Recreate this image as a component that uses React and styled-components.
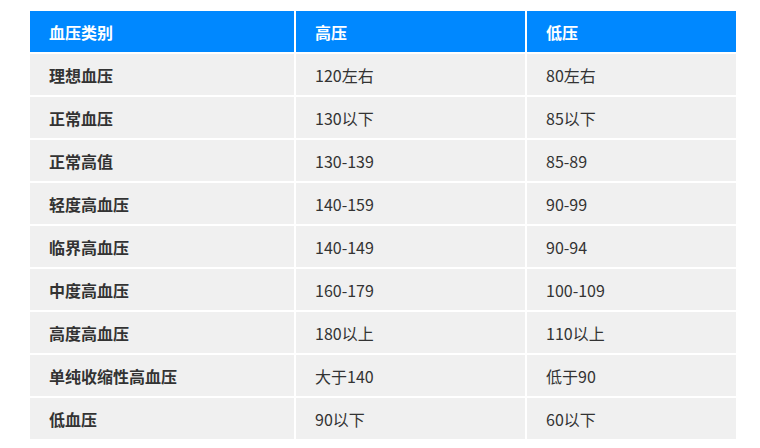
import React from "react";
import styled, { createGlobalStyle } from "styled-components";

const Global = createGlobalStyle`
  html, body { margin: 0; padding: 0; background: #ffffff; }
  body { font-family: "Noto Sans CJK SC", "Noto Sans", sans-serif; }
`;

const Page = styled.div`
  padding: 9px 0 0 28px;
`;

const Table = styled.table`
  border-collapse: separate;
  border-spacing: 2px;
  table-layout: fixed;
  width: 710px;
  font-size: 16px;
`;

const Col = styled.col`
  width: ${(p) => p.$w}px;
`;

const HeadCell = styled.th`
  height: 41px;
  padding: 0 0 0 19px;
  box-sizing: border-box;
  background: #0088ff;
  color: #ffffff;
  font-weight: 700;
  text-align: left;
  vertical-align: middle;
`;

const Cell = styled.td`
  height: 41px;
  padding: 0 0 0 19px;
  box-sizing: border-box;
  background: #f0f0f0;
  color: #333333;
  font-weight: ${(p) => (p.$strong ? 700 : 400)};
  text-align: left;
  vertical-align: middle;
  white-space: nowrap;
`;

const rows = [
  ["理想血压", "120左右", "80左右"],
  ["正常血压", "130以下", "85以下"],
  ["正常高值", "130-139", "85-89"],
  ["轻度高血压", "140-159", "90-99"],
  ["临界高血压", "140-149", "90-94"],
  ["中度高血压", "160-179", "100-109"],
  ["高度高血压", "180以上", "110以上"],
  ["单纯收缩性高血压", "大于140", "低于90"],
  ["低血压", "90以下", "60以下"],
];

export default function App() {
  return (
    <Page>
      <Global />
      <Table>
        <colgroup>
          <Col $w={264} />
          <Col $w={229} />
          <Col $w={209} />
        </colgroup>
        <thead>
          <tr>
            <HeadCell>血压类别</HeadCell>
            <HeadCell>高压</HeadCell>
            <HeadCell>低压</HeadCell>
          </tr>
        </thead>
        <tbody>
          {rows.map((r) => (
            <tr key={r[0]}>
              <Cell $strong>{r[0]}</Cell>
              <Cell>{r[1]}</Cell>
              <Cell>{r[2]}</Cell>
            </tr>
          ))}
        </tbody>
      </Table>
    </Page>
  );
}
